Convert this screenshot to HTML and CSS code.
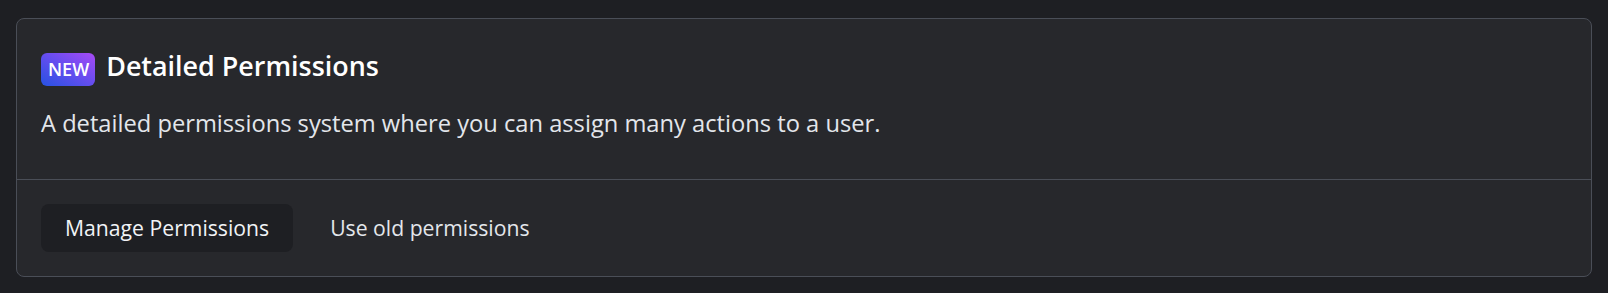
FILE: index.html
```html
<!DOCTYPE html>
<html lang="en">
<head>
<meta charset="utf-8">
<title>Detailed Permissions</title>
<link rel="stylesheet" href="styles.css">
</head>
<body>
  <section class="card">
    <div class="card-body">
      <div class="title-row">
        <span class="badge">NEW</span>
        <h2 class="title">Detailed Permissions</h2>
      </div>
      <p class="desc">A detailed permissions system where you can assign many actions to a user.</p>
    </div>
    <div class="card-footer">
      <button class="btn btn-primary" type="button">Manage Permissions</button>
      <button class="btn btn-link" type="button">Use old permissions</button>
    </div>
  </section>
</body>
</html>
```
FILE: styles.css
```css
html, body {
  margin: 0;
  background: #1e1f23;
}
body {
  padding: 18px 16px;
  font-family: "Open Sans", "Noto Sans", sans-serif;
  color: #e3e6eb;
}
.card {
  background: #27282c;
  border: 1px solid #4a4e57;
  border-radius: 8px;
}
.card-body {
  padding: 29px 24px 40px;
}
.title-row {
  display: flex;
  align-items: baseline;
  gap: 11px;
  margin-bottom: 21px;
}
.badge {
  display: inline-block;
  height: 33px;
  line-height: 33px;
  padding: 0 6px 0 7px;
  border-radius: 6px;
  background: linear-gradient(to top right, #2652e2 0%, #6a4df0 55%, #a84af5 100%);
  color: #ffffff;
  font-size: 18px;
  font-weight: 600;
}
.title {
  margin: 0;
  font-size: 26.9px;
  line-height: 36px;
  font-weight: 600;
  color: #ffffff;
}
.desc {
  margin: 0;
  font-size: 23.7px;
  line-height: 32px;
  color: #e3e6eb;
}
.card-footer {
  border-top: 1px solid #4a4e57;
  padding: 24px;
  display: flex;
  gap: 13px;
}
.btn {
  height: 48px;
  line-height: 48px;
  padding: 0 24px;
  border: 0;
  border-radius: 8px;
  font-family: inherit;
  font-size: 21.2px;
  color: #f1f3f6;
  cursor: pointer;
}
.btn-primary {
  background: #1e1f23;
}
.btn-link {
  background: transparent;
  color: #e3e6eb;
}
```
